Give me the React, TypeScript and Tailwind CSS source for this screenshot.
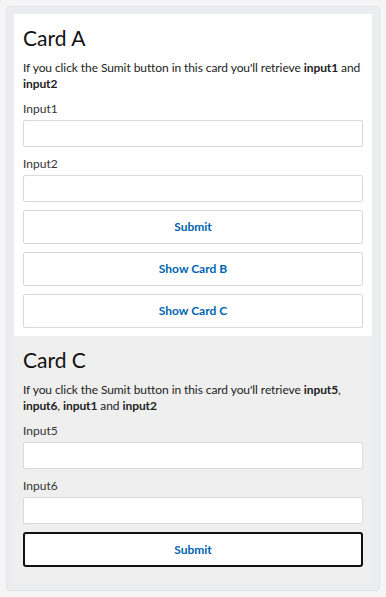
import type { ReactNode } from 'react';

const font = { fontFamily: 'Lato, "Open Sans", sans-serif' };

function Field({ label }: { label: string }) {
  return (
    <div className="mt-[9px] flex flex-col">
      <label className="text-[12px] leading-[16px] text-[#333]">{label}</label>
      <input
        type="text"
        className="mt-[3px] h-[27px] w-full rounded-[2px] border border-[#dadada] bg-white px-2 text-[12px] outline-none"
      />
    </div>
  );
}

function ActionButton({ children, focused }: { children: ReactNode; focused?: boolean }) {
  return (
    <button
      type="button"
      className={
        focused
          ? 'h-[35px] w-full rounded-[3px] border-2 border-[#111] bg-white text-[12px] font-bold text-[#0063b1]'
          : 'h-[34px] w-full rounded-[2px] border border-[#dadada] bg-white text-[12px] font-bold text-[#0063b1]'
      }
    >
      {children}
    </button>
  );
}

function Description({ children }: { children: ReactNode }) {
  return (
    <p className="mt-[8px] text-[12px] leading-[16px] tracking-[-0.08px] text-[#222]">{children}</p>
  );
}

export default function App() {
  return (
    <div className="min-h-screen bg-[#f5f5f5] p-[6px]" style={font}>
      <div className="rounded-[3px] border border-[#e2e4e6] bg-[#ebedf0] p-[7px]">
        {/* Card A */}
        <div className="bg-white px-[9px] pt-[10px] pb-[8px]">
          <h2 className="text-[21px] leading-[28px] text-[#111]">Card A</h2>
          <Description>
            If you click the Sumit button in this card you'll retrieve <b>input1</b> and{' '}
            <b>input2</b>
          </Description>
          <Field label="Input1" />
          <Field label="Input2" />
          <div className="mt-[8px] flex flex-col gap-[8px]">
            <ActionButton>Submit</ActionButton>
            <ActionButton>Show Card B</ActionButton>
            <ActionButton>Show Card C</ActionButton>
          </div>
        </div>

        {/* Card C (shown) */}
        <div className="bg-[#efefef] px-[9px] pt-[10px] pb-[16px]">
          <h2 className="text-[21px] leading-[28px] text-[#111]">Card C</h2>
          <Description>
            If you click the Sumit button in this card you'll retrieve <b>input5</b>,{' '}
            <b>input6</b>, <b>input1</b> and <b>input2</b>
          </Description>
          <Field label="Input5" />
          <Field label="Input6" />
          <div className="mt-[8px]">
            <ActionButton focused>Submit</ActionButton>
          </div>
        </div>
      </div>
    </div>
  );
}
